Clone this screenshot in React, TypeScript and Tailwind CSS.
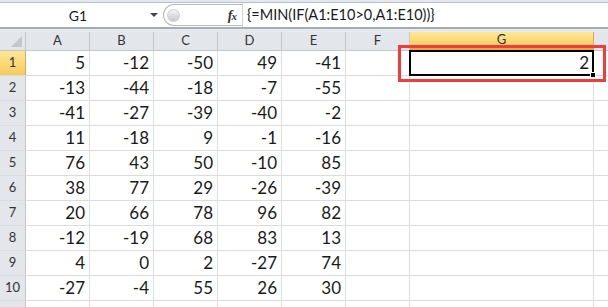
import React from 'react';

const data: number[][] = [
  [5, -12, -50, 49, -41],
  [-13, -44, -18, -7, -55],
  [-41, -27, -39, -40, -2],
  [11, -18, 9, -1, -16],
  [76, 43, 50, -10, 85],
  [38, 77, 29, -26, -39],
  [20, 66, 78, 96, 82],
  [-12, -19, 68, 83, 13],
  [4, 0, 2, -27, 74],
  [-27, -4, 55, 26, 30],
];

const cols = ['A', 'B', 'C', 'D', 'E', 'F', 'G'];
const colW = ['w-[64px]', 'w-[64px]', 'w-[64px]', 'w-[64px]', 'w-[64px]', 'w-[64px]', 'w-[184px]'];

export default function App() {
  return (
    <div className="w-[608px] h-[307px] overflow-hidden bg-white font-['Lato','Liberation_Sans',sans-serif] text-[#1a1a1a]">
      {/* formula bar */}
      <div className="h-[2px] bg-[#e4e8ee]" />
      <div className="h-[1px] bg-[#b9bfc7]" />
      <div className="flex h-[24px] bg-white items-center">
        <div className="w-[150px] h-full flex items-center justify-center text-[14px] pl-[6px]">G1</div>
        <div className="w-[10px] h-full flex items-center">
          <div className="w-0 h-0 border-l-[4px] border-r-[4px] border-t-[4px] border-l-transparent border-r-transparent border-t-[#444]" />
        </div>
        <div className="ml-[3px] w-[79px] h-[22px] rounded-l-[11px] border border-r-0 border-[#b4b9c0] flex items-center">
          <div className="ml-[3px] w-[13px] h-[13px] rounded-full bg-gradient-to-b from-[#f2f3f5] to-[#c7cbd0] border border-[#c9ccd1]" />
          <div className="flex-1" />
          <span className="font-['Liberation_Serif',serif] italic font-bold text-[14px] text-[#333] pr-[6px] tracking-[-1px]">f<span className="text-[11px]">x</span></span>
        </div>
        <div className="h-full border-l border-[#d0d4d9] pl-[4px] flex items-center text-[14.5px] whitespace-nowrap">
          {'{=MIN(IF(A1:E10>0,A1:E10))}'}
        </div>
      </div>
      <div className="h-[2px] bg-[#a6acb4]" />
      <div className="h-[3px] bg-[#e6e9ee]" />

      {/* column headers */}
      <div className="flex h-[19px] bg-[#e3e6ea] border-b border-[#c3c7cc] text-[13px] text-[#333]">
        <div className="w-[26px] border-r border-[#c3c7cc] relative">
          <div className="absolute right-[3px] bottom-[3px] w-0 h-0 border-l-[11px] border-t-[11px] border-l-transparent border-t-transparent border-b-[#c4c8cd] border-r-[#c4c8cd] border-b-0 border-r-[11px]" />
        </div>
        {cols.map((c, i) => (
          <div
            key={c}
            className={`${colW[i]} border-r flex items-center justify-center ${
              c === 'G'
                ? 'bg-gradient-to-b from-[#fde896] to-[#f6ca5d] border-[#e0a94a] border-b-2 border-b-[#f0a13c]'
                : 'border-[#c3c7cc]'
            }`}
          >
            {c}
          </div>
        ))}
        <div className="flex-1" />
      </div>

      {/* rows */}
      <div className="relative">
        {data.map((row, r) => (
          <div key={r} className="flex h-[25px] border-b border-[#dadcdd]">
            <div
              className={`w-[26px] border-r flex items-center justify-center text-[13px] text-[#333] ${
                r === 0
                  ? 'bg-gradient-to-b from-[#fde896] to-[#f6ca5d] border-[#e0a94a]'
                  : 'bg-[#e3e6ea] border-[#c3c7cc]'
              }`}
            >
              {r + 1}
            </div>
            {cols.map((c, i) => (
              <div
                key={c}
                className={`${colW[i]} border-r border-[#dadcdd] flex items-end justify-end pr-[4px] pb-[1px] text-[17px] leading-[22px]`}
              >
                {i < 5 ? row[i] : r === 0 && c === 'G' ? 2 : ''}
              </div>
            ))}
            <div className="flex-1" />
          </div>
        ))}
        <div className="flex h-[10px]">
          <div className="w-[26px] bg-[#e3e6ea] border-r border-[#c3c7cc]" />
          {cols.map((c, i) => (
            <div key={c} className={`${colW[i]} border-r border-[#dadcdd]`} />
          ))}
        </div>

        {/* selected cell G1 */}
        <div className="absolute left-[409px] top-[-1px] w-[185px] h-[26px] border-2 border-black pointer-events-none">
          <div className="absolute right-[-4px] bottom-[-4px] w-[6px] h-[6px] bg-black border border-white" />
        </div>
        {/* red highlight */}
        <div className="absolute left-[398px] top-[-6px] w-[208px] h-[37px] border-[3px] border-[#f23b3b] pointer-events-none" />
      </div>
    </div>
  );
}
